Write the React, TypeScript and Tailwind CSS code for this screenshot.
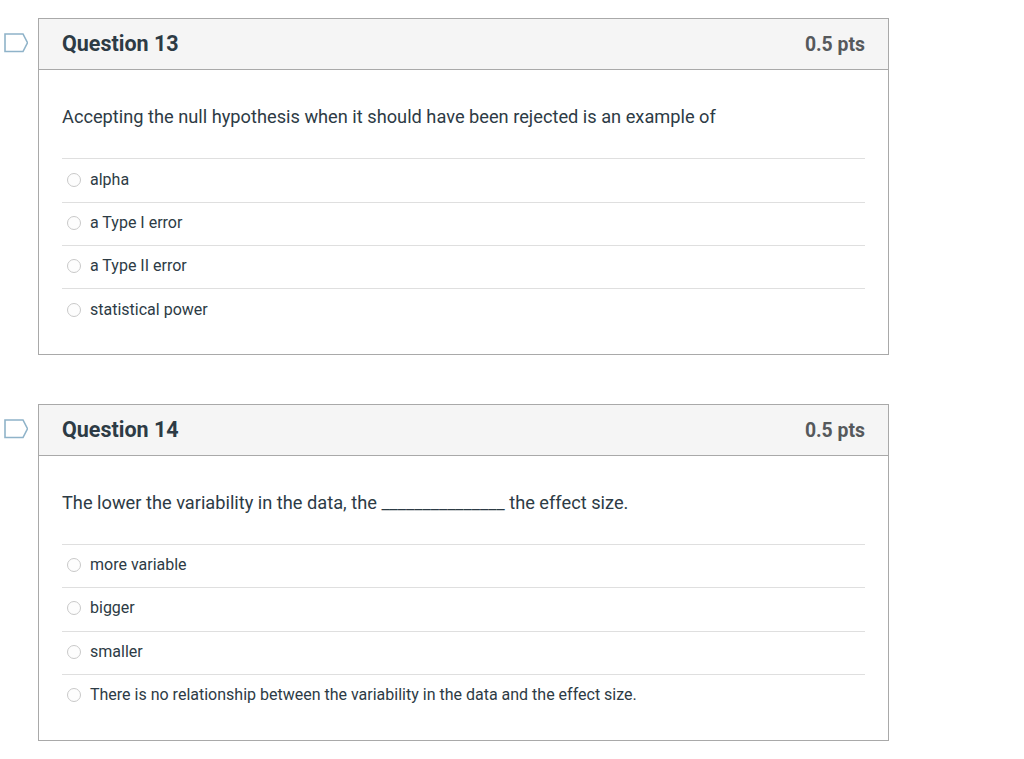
type QuestionData = {
  title: string
  prompt: string
  answers: string[]
}

const questions: QuestionData[] = [
  {
    title: "Question 13",
    prompt: "Accepting the null hypothesis when it should have been rejected is an example of",
    answers: ["alpha", "a Type I error", "a Type II error", "statistical power"],
  },
  {
    title: "Question 14",
    prompt: "The lower the variability in the data, the _______________ the effect size.",
    answers: [
      "more variable",
      "bigger",
      "smaller",
      "There is no relationship between the variability in the data and the effect size.",
    ],
  },
]

function Flag() {
  return (
    <svg className="absolute left-[-35px] top-[14px]" width="24" height="20" viewBox="0 0 24 20" fill="none">
      <path d="M1 1H19L23.5 9.75L19 18.5H1Z" stroke="#8fb3c9" strokeWidth="1.6" />
    </svg>
  )
}

function Question({ data }: { data: QuestionData }) {
  return (
    <div className="relative w-[851px] border border-[#a9a9a9]">
      <Flag />
      <div className="flex h-[51px] items-center justify-between border-b border-[#a9a9a9] bg-[#f5f5f5] px-[23px]">
        <h2 className="pt-[1px] text-[21.5px] font-bold text-[#2d3b45]">{data.title}</h2>
        <span className="pt-[1px] text-[19.4px] font-bold text-[#56595c]">0.5 pts</span>
      </div>
      <div className="px-[23px] pb-[22.28px]">
        <p className="flex h-[88.4px] items-center pt-[5px] text-[18.23px] text-[#2d3b45]">{data.prompt}</p>
        {data.answers.map((answer) => (
          <div key={answer} className="flex h-[43.33px] items-center border-t border-[#dfdfdf] pb-[2px]">
            <span className="ml-[5px] h-[14px] w-[14px] rounded-full border border-[#c9c9c9] bg-[#fdfdfd]" />
            <span className="ml-[9px] text-[16px] text-[#2d3b45]">{answer}</span>
          </div>
        ))}
      </div>
    </div>
  )
}

export default function App() {
  return (
    <div className="h-[759px] w-[1024px] overflow-hidden bg-white pl-[38px] pt-[18px] font-['Roboto',sans-serif]">
      <div className="flex flex-col gap-[48.6px]">
        {questions.map((q) => (
          <Question key={q.title} data={q} />
        ))}
      </div>
    </div>
  )
}
